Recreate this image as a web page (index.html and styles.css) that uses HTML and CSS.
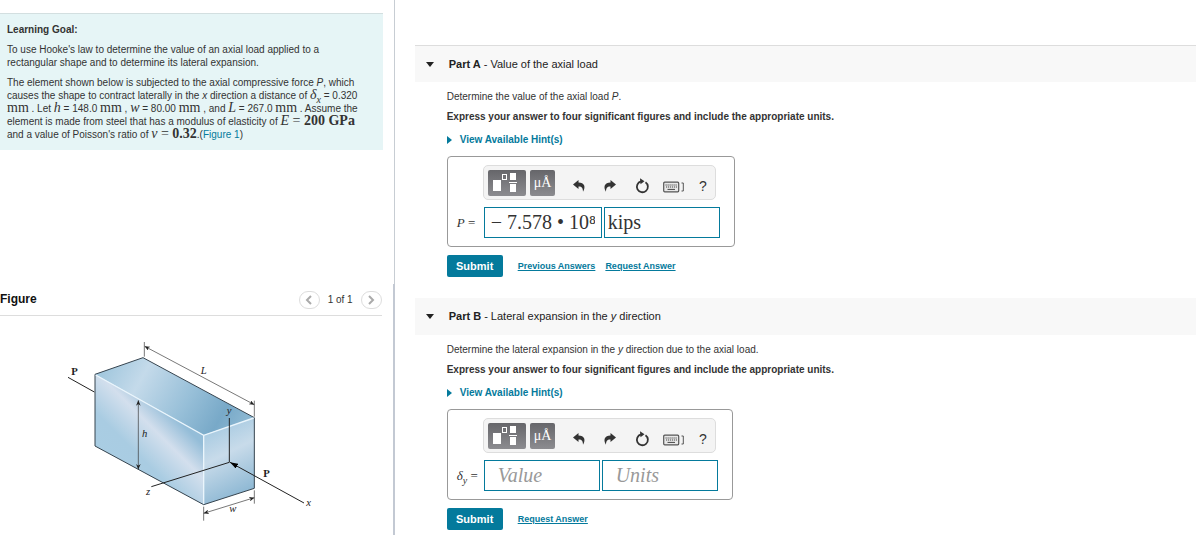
FILE: index.html
```html
<!DOCTYPE html>
<html lang="en">
<head>
  <meta charset="UTF-8" />
  <meta name="viewport" content="width=device-width, initial-scale=1.0"/>
  <title>Axial Load and Lateral Expansion</title>
  <link rel="stylesheet" href="styles.css">
</head>
<body>
  <!-- Shared icons -->
  <svg class="sprite" aria-hidden="true">
    <symbol id="icon-template" viewBox="0 0 38 26">
      <rect x="5" y="10" width="8" height="11" fill="#fff"/>
      <rect x="14.5" y="4.5" width="4" height="5" fill="none" stroke="#fff"/>
      <rect x="22" y="3" width="6" height="7" fill="#fff"/>
      <rect x="21" y="12" width="8" height="1" fill="#fff"/>
      <rect x="22" y="14" width="6" height="8" fill="#fff"/>
    </symbol>
    <symbol id="icon-undo" viewBox="0 0 14 14">
      <path d="M6.5 1 L1 5.5 L6.5 10 V7.4 C9.5 7.2 11 8.5 11 12.8 C14 8 12.5 3.6 6.5 3.6 Z" fill="#333"/>
    </symbol>
    <symbol id="icon-redo" viewBox="0 0 14 14">
      <path d="M7.5 1 L13 5.5 L7.5 10 V7.4 C4.5 7.2 3 8.5 3 12.8 C0 8 1.5 3.6 7.5 3.6 Z" fill="#333"/>
    </symbol>
    <symbol id="icon-reset" viewBox="0 0 16 16">
      <path d="M11.5 4.2 A5.5 5.5 0 1 1 7 3.4" fill="none" stroke="#333" stroke-width="1.8"/>
      <path d="M6 0.3 L10.5 3.2 L6.5 6.2 Z" fill="#333"/>
    </symbol>
    <symbol id="icon-keyboard" viewBox="0 0 22 12">
      <rect x="0.7" y="1.2" width="15" height="9.6" rx="1" fill="#e8e8e8" stroke="#555" stroke-width="1.2"/>
      <path d="M2.5 4 H14 M3 6 H14" stroke="#444" stroke-width="1.1" stroke-dasharray="1.2 0.8"/>
      <path d="M4.5 8.4 H12" stroke="#444" stroke-width="1"/>
      <path d="M18.5 2 H20.3 V10 H18.5" fill="none" stroke="#555"/>
    </symbol>
  </svg>

  <div class="page">
    <aside class="left">
      <div class="intro">
        <div class="goal">
          <p><b>Learning Goal:</b></p>
          <p>To use Hooke's law to determine the value of an axial load applied to a<br>rectangular shape and to determine its lateral expansion.</p>
          <p class="problem">The element shown below is subjected to the axial compressive force <i>P</i>, which<br>
            causes the shape to contract laterally in the <i>x</i> direction a distance of <span class="math"><i>δ<sub>x</sub></i></span> = 0.320<br>
            <span class="math">mm</span> . Let <span class="math"><i>h</i></span> = 148.0 <span class="math">mm</span> , <span class="math"><i>w</i></span> = 80.00 <span class="math">mm</span> , and <span class="math"><i>L</i></span> = 267.0 <span class="math">mm</span> . Assume the<br>
            element is made from steel that has a modulus of elasticity of <span class="math"><i>E</i> = <b>200 GPa</b></span><br>
            and a value of Poisson's ratio of <span class="math"><i>v</i> = <b>0.32</b></span>.(<a href="#figure">Figure 1</a>)</p>
        </div>
      </div>

      <div class="figure" id="figure">
        <div class="figure-head">
          <h2>Figure</h2>
          <div class="pager">
            <button aria-label="Previous figure"><svg width="8" height="10" viewBox="0 0 8 10"><path d="M6 1 L2 5 L6 9"/></svg></button>
            <span>1 of 1</span>
            <button aria-label="Next figure"><svg width="8" height="10" viewBox="0 0 8 10"><path d="M2 1 L6 5 L2 9"/></svg></button>
          </div>
        </div>

        <svg class="drawing" viewBox="0 0 810 615" role="img" aria-label="Rectangular block under axial load P">
          <defs>
            <linearGradient id="side" gradientUnits="userSpaceOnUse" x1="105" y1="348" x2="277" y2="176">
              <stop offset="0" stop-color="#a9cde3"/>
              <stop offset="0.3" stop-color="#a9cce2"/>
              <stop offset="0.66" stop-color="#d3dfed"/>
              <stop offset="0.95" stop-color="#94bdd8"/>
            </linearGradient>
            <linearGradient id="top" gradientUnits="userSpaceOnUse" x1="150" y1="90" x2="530" y2="310">
              <stop offset="0" stop-color="#a3c8de"/>
              <stop offset="0.25" stop-color="#c4daea"/>
              <stop offset="0.6" stop-color="#97bfd8"/>
              <stop offset="0.85" stop-color="#78a9c8"/>
              <stop offset="1" stop-color="#8ab6d1"/>
            </linearGradient>
            <linearGradient id="end" gradientUnits="userSpaceOnUse" x1="460" y1="290" x2="560" y2="490">
              <stop offset="0" stop-color="#a6cae1"/>
              <stop offset="0.4" stop-color="#c8dbea"/>
              <stop offset="1" stop-color="#8cb7d3"/>
            </linearGradient>
            <marker id="tip" viewBox="0 0 16 14" refX="16" refY="7" markerWidth="16" markerHeight="14" markerUnits="userSpaceOnUse" orient="auto-start-reverse">
              <path d="M0 0 L16 7 L0 14 L5 7 Z" fill="#222"/>
            </marker>
            <marker id="load" viewBox="0 0 24 16" refX="24" refY="8" markerWidth="24" markerHeight="16" markerUnits="userSpaceOnUse" orient="auto">
              <path d="M0 0 L24 8 L0 16 Z" fill="#000"/>
            </marker>
          </defs>

          <polygon points="105,133 431,316 431,524 105,348" fill="url(#side)"/>
          <polygon points="105,133 249,83 583,263 431,316" fill="url(#top)"/>
          <polygon points="431,316 583,263 583,475 431,524" fill="url(#end)"/>
          <path d="M105 133 L249 83 L583 263 V475 L431 524 L105 348 Z" fill="none" stroke="#36444f" stroke-width="3"/>
          <path d="M107 135 L431 316 L581 264 M431 316 V522" fill="none" stroke="#eaf5fc" stroke-width="4"/>

          <!-- Dimensions -->
          <g class="dimension">
            <path d="M253 36 V80 M583 212 V260 M431 530 V572 M583 481 V521"/>
            <path d="M254 49 L583 224" marker-start="url(#tip)" marker-end="url(#tip)"/>
            <path d="M235 211 V418" marker-start="url(#tip)" marker-end="url(#tip)"/>
            <path d="M431 550 L583 503" marker-start="url(#tip)" marker-end="url(#tip)"/>
          </g>

          <!-- Axes and load -->
          <g class="axis">
            <path d="M508 264 V397 L274 470"/>
            <path d="M24 142 L103 186"/>
            <path d="M732 519 L510 397" marker-end="url(#load)"/>
          </g>

          <g class="labels">
            <text x="34" y="134" class="force">P</text>
            <text x="610" y="441" class="force">P</text>
            <text x="422" y="132">L</text>
            <text x="246" y="322">h</text>
            <text x="500" y="252">y</text>
            <text x="258" y="494">z</text>
            <text x="508" y="547">w</text>
            <text x="739" y="528">x</text>
          </g>
        </svg>
      </div>
    </aside>

    <main class="right">
      <section class="part">
        <h2 class="part-head part-a"><span class="caret"></span><span><b>Part A</b> - Value of the axial load</span></h2>
        <div class="part-body">
          <p>Determine the value of the axial load <i>P</i>.</p>
          <p><b>Express your answer to four significant figures and include the appropriate units.</b></p>
          <button class="hints">View Available Hint(s)</button>
          <div class="answer">
            <div class="toolbar">
              <button class="dark wide" aria-label="Templates"><svg width="38" height="26"><use href="#icon-template"/></svg></button>
              <button class="dark">μÅ</button>
              <button class="tool" aria-label="Undo"><svg width="14" height="14"><use href="#icon-undo"/></svg></button>
              <button class="tool" aria-label="Redo"><svg width="14" height="14"><use href="#icon-redo"/></svg></button>
              <button class="tool" aria-label="Reset"><svg width="16" height="16"><use href="#icon-reset"/></svg></button>
              <button class="tool keys" aria-label="Keyboard shortcuts"><svg width="22" height="12"><use href="#icon-keyboard"/></svg></button>
              <button class="tool help" aria-label="Help">?</button>
            </div>
            <div class="fields">
              <label for="value-a"><i>P</i> =</label>
              <input type="text" id="value-a" class="filled" value="− 7.578 • 10⁸">
              <input type="text" id="units-a" class="unit" aria-label="Units" value="kips">
            </div>
          </div>
          <div class="actions">
            <button class="submit">Submit</button>
            <a href="#previous">Previous Answers</a>
            <a href="#request-a">Request Answer</a>
          </div>
        </div>
      </section>

      <section class="part">
        <h2 class="part-head"><span class="caret"></span><span><b>Part B</b> - Lateral expansion in the <i>y</i> direction</span></h2>
        <div class="part-body">
          <p>Determine the lateral expansion in the <i>y</i> direction due to the axial load.</p>
          <p><b>Express your answer to four significant figures and include the appropriate units.</b></p>
          <button class="hints">View Available Hint(s)</button>
          <div class="answer">
            <div class="toolbar">
              <button class="dark wide" aria-label="Templates"><svg width="38" height="26"><use href="#icon-template"/></svg></button>
              <button class="dark">μÅ</button>
              <button class="tool" aria-label="Undo"><svg width="14" height="14"><use href="#icon-undo"/></svg></button>
              <button class="tool" aria-label="Redo"><svg width="14" height="14"><use href="#icon-redo"/></svg></button>
              <button class="tool" aria-label="Reset"><svg width="16" height="16"><use href="#icon-reset"/></svg></button>
              <button class="tool keys" aria-label="Keyboard shortcuts"><svg width="22" height="12"><use href="#icon-keyboard"/></svg></button>
              <button class="tool help" aria-label="Help">?</button>
            </div>
            <div class="fields">
              <label for="value-b"><i>δ<sub>y</sub></i> =</label>
              <input type="text" id="value-b" placeholder="Value">
              <input type="text" id="units-b" aria-label="Units" placeholder="Units">
            </div>
          </div>
          <div class="actions">
            <button class="submit">Submit</button>
            <a href="#request-b">Request Answer</a>
          </div>
        </div>
      </section>
    </main>
  </div>
</body>
</html>
```
FILE: styles.css
```css
* {
  box-sizing: border-box;
}

body {
  margin: 0;
  font-family: "Liberation Sans", Arial, sans-serif;
  font-size: 10px;
  line-height: 13px;
  color: #333;
  background: #fff;
}

p, h2 {
  margin: 0;
}

button {
  padding: 0;
  border: 0;
  background: none;
  font-family: inherit;
  cursor: pointer;
}

a {
  color: #047a9c;
}

.sprite {
  display: none;
}

.page {
  display: grid;
  grid-template-columns: 33% 1fr;
  min-height: 100vh;
}

/* Left column */
.left {
  display: flex;
  flex-direction: column;
}

.intro {
  min-height: 284px;
  padding: 13px 11px 0 0;
  border-right: 1px solid #c7cdd3;
}

.goal {
  padding: 9px 7px;
  border-top: 1px solid #d3dfe0;
  background: #e6f5f6;
}

.goal p + p {
  margin-top: 7px;
}

.goal a {
  text-decoration: none;
}

.math {
  font-family: "Liberation Serif", "Times New Roman", serif;
  font-size: 14px;
  line-height: 0;
}

sub {
  font-size: 10px;
  line-height: 0;
}

.figure {
  flex: 1;
  padding-right: 11px;
  border-right: 2px solid #c3c9d3;
}

.figure-head {
  display: flex;
  align-items: center;
  justify-content: space-between;
  height: 32px;
  border-bottom: 1px solid #ddd;
}

.figure-head h2 {
  font-size: 12px;
  color: #111;
}

.pager {
  display: flex;
  align-items: center;
  gap: 8px;
}

.pager button {
  display: flex;
  align-items: center;
  justify-content: center;
  width: 21px;
  height: 18px;
  border: 1px solid #ddd;
  border-radius: 9px;
}

.pager path {
  fill: none;
  stroke: #aaa;
  stroke-width: 2;
}

.drawing {
  display: block;
  width: 270px;
  max-width: 100%;
  margin: 14px 0 0 60px;
}

.dimension path {
  fill: none;
  stroke: #333;
  stroke-width: 2;
}

.axis path {
  fill: none;
  stroke: #222;
  stroke-width: 3;
}

.labels {
  font-family: "Liberation Serif", "Times New Roman", serif;
  font-size: 32px;
  font-style: italic;
  fill: #222;
}

.labels .force {
  font-style: normal;
  font-weight: bold;
}

/* Right column */
.right {
  padding: 45px 0 0 20px;
}

.part + .part {
  margin-top: 21px;
}

.part-head {
  display: flex;
  align-items: center;
  gap: 15px;
  height: 37px;
  padding-left: 11px;
  background: #f8f8f8;
  font-size: 11px;
  font-weight: normal;
  color: #222;
}

.part-head b {
  font-weight: bold;
}

.part-a {
  border-top: 1px solid #ddd;
}

.caret {
  border: 4px solid transparent;
  border-top: 5px solid #222;
  border-bottom: 0;
}

.part-body {
  padding: 8px 0 0 32px;
}

.part-body p {
  margin-bottom: 7px;
}

.hints {
  display: flex;
  align-items: center;
  gap: 8px;
  margin-top: 10px;
  font-size: 10px;
  font-weight: bold;
  line-height: 13px;
  color: #047a9c;
}

.hints::before {
  content: "";
  border: 4px solid transparent;
  border-left: 5px solid #047a9c;
  border-right: 0;
}

.answer {
  width: fit-content;
  margin-top: 10px;
  padding: 8px 14px 8px 9px;
  border: 1px solid #999;
  border-radius: 4px;
}

.toolbar {
  display: flex;
  align-items: center;
  width: 233px;
  height: 35px;
  margin-left: 26px;
  padding-left: 4px;
  border: 1px solid #ddd;
  border-radius: 5px;
  background: #f4f4f4;
}

.dark {
  display: flex;
  align-items: center;
  justify-content: center;
  width: 26px;
  height: 26px;
  margin-right: 8px;
  border-radius: 2px;
  background: linear-gradient(#66666a, #8c8c90);
  font-family: "Liberation Serif", "Times New Roman", serif;
  font-size: 14px;
  color: #fff;
}

.wide {
  width: 38px;
  margin-right: 4px;
}

.tool {
  display: flex;
  align-items: center;
  justify-content: center;
  width: 32px;
  height: 26px;
  padding-top: 7px;
}

.keys {
  width: 34px;
  padding-top: 8px;
}

.help {
  width: 24px;
  font-size: 14px;
  color: #333;
}

.fields {
  display: flex;
  align-items: center;
  gap: 2px;
  margin-top: 7px;
  font-family: "Liberation Serif", "Times New Roman", serif;
}

.fields label {
  width: 25px;
  font-size: 13px;
  white-space: nowrap;
}

.fields input {
  width: 116px;
  height: 31px;
  padding: 0 6px;
  border: 1px solid #047a9c;
  font-family: inherit;
  font-size: 20px;
  color: #333;
}

.fields .filled {
  width: 118px;
}

.fields .unit {
  padding: 0 3px;
}

.fields input::placeholder {
  padding-left: 7px;
  font-style: italic;
  color: #999;
}

.actions {
  display: flex;
  align-items: center;
  gap: 10px;
  margin-top: 8px;
  font-size: 9px;
  font-weight: bold;
}

.submit {
  width: 56px;
  height: 22px;
  margin-right: 5px;
  border-radius: 2px;
  background: #047a9c;
  font-size: 11px;
  font-weight: bold;
  color: #fff;
}
```
